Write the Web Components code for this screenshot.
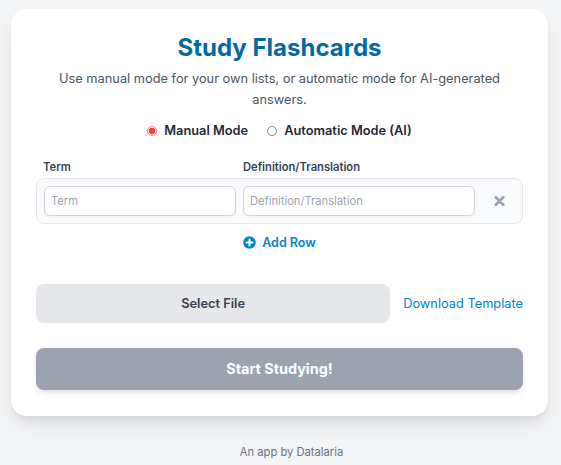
<!DOCTYPE html>
<html>
<head>
<meta charset="utf-8">
<style>
    html, body { margin: 0; height: 100%; }
    body {
        background: #f3f4f6;
        font-family: Inter, "Liberation Sans", sans-serif;
        box-sizing: border-box;
        padding: 9px 13px 0 11px;
        overflow: hidden;
    }
</style>
</head>
<body>
<fc-app>
    <span slot="title">Study Flashcards</span>
    <span slot="intro">Use manual mode for your own lists, or automatic mode for AI-generated answers.</span>
    <span slot="footer">An app by Datalaria</span>
</fc-app>

<script>
class FcModePicker extends HTMLElement {
    constructor() {
        super();
        this.attachShadow({ mode: "open" });
        this.shadowRoot.innerHTML = `
            <style>
            :host { display: flex; justify-content: center; gap: 19px; height: 20px; align-items: center; }
            label { display: flex; align-items: center; gap: 7px; font-size: 12.8px; font-weight: 600; color: #1f2937; }
            input {
                appearance: none;
                box-sizing: border-box;
                margin: 0;
                width: 10px;
                height: 10px;
                border: 1px solid #8f8f8f;
                border-radius: 50%;
                background: #fff;
            }
            input:checked {
                border-color: #f98080;
                background: radial-gradient(circle, #f43f3f 0, #f43f3f 3px, #fff 3.6px);
            }
            </style>
            <label><input type="radio" name="mode" checked>Manual Mode</label>
            <label><input type="radio" name="mode">Automatic Mode (AI)</label>
        `;
    }
}
customElements.define('fc-mode-picker', FcModePicker);

class FcTermRow extends HTMLElement {
    constructor() {
        super();
        this.attachShadow({ mode: "open" });
        this.shadowRoot.innerHTML = `
            <style>
            :host {
                display: grid;
                grid-template-columns: 192px 232px 1fr;
                column-gap: 7px;
                align-items: center;
                box-sizing: border-box;
                height: 46px;
                padding: 0 6px 0 7px;
                background: #f9fafb;
                border: 1px solid #e5e7eb;
                border-radius: 8px;
            }
            input {
                box-sizing: border-box;
                width: 100%;
                height: 30px;
                padding: 0 6px;
                font: 400 11.2px Inter, "Liberation Sans", sans-serif;
                color: #1f2937;
                background: #fff;
                border: 1px solid #d1d5db;
                border-radius: 6px;
                box-shadow: 0 1px 2px rgba(0,0,0,.05);
                outline: none;
            }
            input::placeholder { color: #9ca3af; opacity: 1; }
            button { display: flex; justify-content: center; padding: 0; border: 0; background: none; }
            svg { display: block; }
            </style>
            <input placeholder="Term">
            <input placeholder="Definition/Translation">
            <button aria-label="Remove">
                <svg width="11" height="10" viewBox="0 0 11 10"><path d="M1.8 1.3 9.2 8.7M9.2 1.3 1.8 8.7" stroke="#9ca3af" stroke-width="2.8" stroke-linecap="round"/></svg>
            </button>
        `;
    }
}
customElements.define('fc-term-row', FcTermRow);

class FcApp extends HTMLElement {
    constructor() {
        super();
        this.attachShadow({ mode: "open" });
        this.shadowRoot.innerHTML = `
            <style>
            :host { display: block; }
            .card {
                box-sizing: border-box;
                height: 407px;
                padding: 24px 25px 0;
                background: #fff;
                border-radius: 16px;
                box-shadow: 0 10px 15px -3px rgba(0,0,0,.1), 0 4px 6px -2px rgba(0,0,0,.05);
            }
            h1 {
                margin: 0;
                height: 30px;
                line-height: 30px;
                font-size: 24px;
                font-weight: 700;
                text-align: center;
                color: #0369a1;
            }
            .intro {
                margin: 6px 0 0;
                font-size: 12.8px;
                line-height: 20.8px;
                text-align: center;
                color: #4b5563;
            }
            fc-mode-picker { margin-top: 10.4px; }
            .labels {
                display: grid;
                grid-template-columns: 200px 1fr;
                margin-top: 18px;
                padding-left: 7px;
                height: 16px;
                line-height: 16px;
                font-size: 11.2px;
                font-weight: 600;
                color: #374151;
            }
            fc-term-row { margin-top: 3px; }
            .add {
                display: flex;
                justify-content: center;
                align-items: center;
                gap: 6px;
                height: 20px;
                margin-top: 9px;
                font-size: 12.5px;
                font-weight: 600;
                color: #0284c7;
            }
            .file {
                display: flex;
                align-items: center;
                gap: 13px;
                margin-top: 31px;
            }
            .select {
                flex: 1;
                height: 39px;
                line-height: 39px;
                text-align: center;
                font-size: 12.8px;
                font-weight: 600;
                color: #374151;
                background: #e5e7eb;
                border-radius: 8px;
            }
            .template { font-size: 12.8px; color: #0284c7; }
            .start {
                height: 42px;
                line-height: 42px;
                margin-top: 25px;
                text-align: center;
                font-size: 14.4px;
                font-weight: 700;
                color: #fff;
                background: #9ca3af;
                border-radius: 8px;
                box-shadow: 0 4px 6px -1px rgba(0,0,0,.1), 0 2px 4px -1px rgba(0,0,0,.06);
            }
            footer {
                margin-top: 28px;
                padding-left: 24px;
                height: 16px;
                line-height: 16px;
                font-size: 11.2px;
                text-align: center;
                color: #6b7280;
            }
            svg { display: block; }
            </style>
            <div class="card">
                <h1><slot name="title"></slot></h1>
                <p class="intro"><slot name="intro"></slot></p>
                <fc-mode-picker></fc-mode-picker>
                <div class="labels"><span>Term</span><span>Definition/Translation</span></div>
                <fc-term-row></fc-term-row>
                <div class="add">
                    <svg width="13" height="13" viewBox="0 0 13 13"><circle cx="6.5" cy="6.5" r="6.25" fill="#0284c7"/><path d="M6.5 3.5v6M3.5 6.5h6" stroke="#fff" stroke-width="2" stroke-linecap="round"/></svg>
                    <span>Add Row</span>
                </div>
                <div class="file">
                    <div class="select">Select File</div>
                    <span class="template">Download Template</span>
                </div>
                <div class="start">Start Studying!</div>
            </div>
            <footer><slot name="footer"></slot></footer>
        `;
    }
}
customElements.define('fc-app', FcApp);
</script>
</body>
</html>
